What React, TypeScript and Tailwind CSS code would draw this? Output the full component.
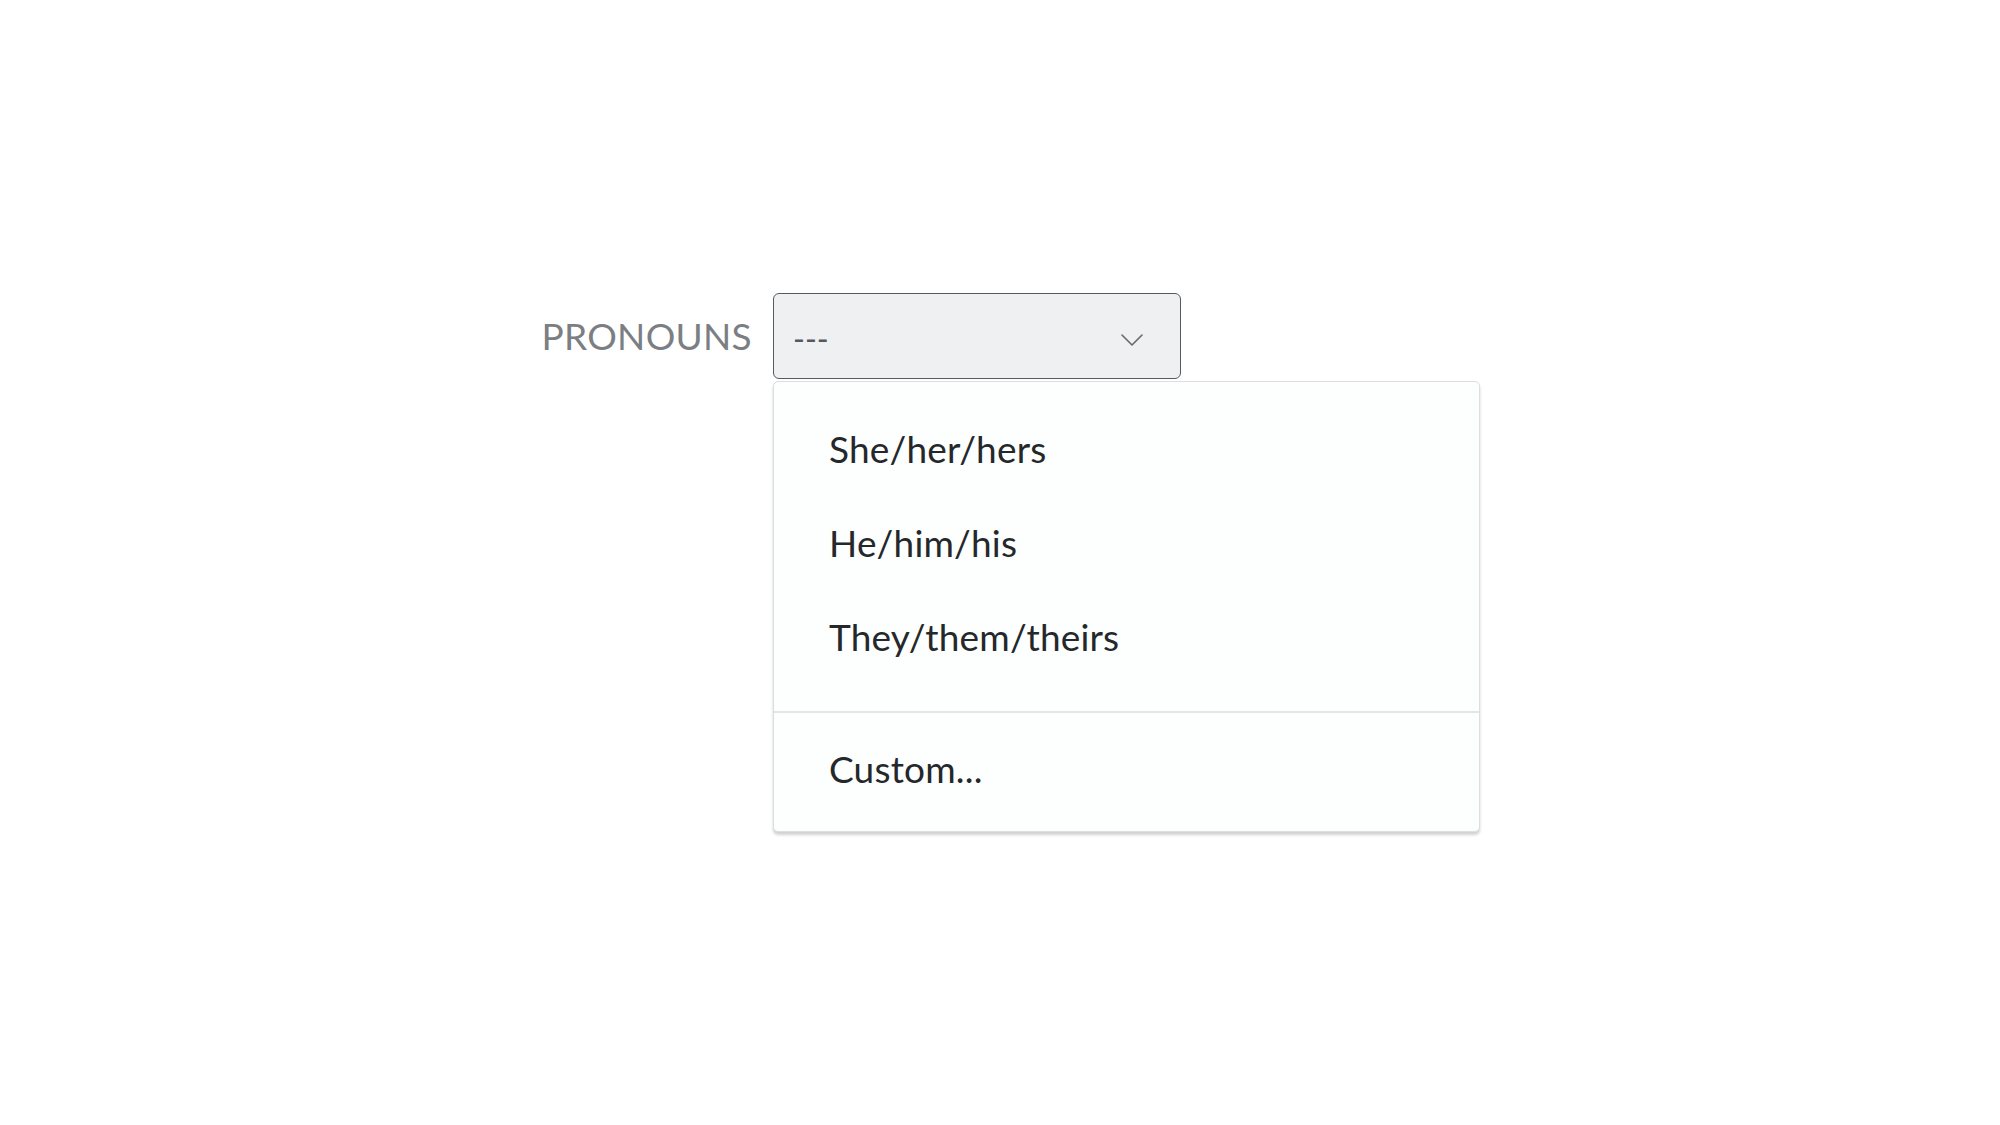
const options = ["She/her/hers", "He/him/his", "They/them/theirs"];

const font = { fontFamily: "Lato, 'Open Sans', sans-serif" };

export default function App() {
  return (
    <main
      className="min-h-screen w-full bg-white pt-[293px] pl-[536px]"
      style={font}
    >
      <div className="flex items-center">
        <label className="w-[237px] pr-[21px] text-right text-[37px] tracking-[0.3px] text-[#7b7f83]">
          PRONOUNS
        </label>
        <div className="relative">
          <div className="flex h-[86px] w-[408px] items-center justify-between rounded-[6px] border-[1.5px] border-[#56595d] bg-[#eff0f1] pl-[19px] pr-[37px]">
            <span className="pt-[6px] text-[32px] text-[#55595d]">---</span>
            <svg
              className="mt-[8px] h-[12px] w-[22px] text-[#666a6e]"
              viewBox="0 0 22 12"
              fill="none"
              stroke="currentColor"
              strokeWidth={1.6}
              strokeLinecap="round"
              strokeLinejoin="round"
            >
              <path d="M1 1l10 10L21 1" />
            </svg>
          </div>
          <div className="absolute left-0 top-[88px] z-10 w-[707px] rounded-[5px] border border-[#dcdedf] bg-[#fdfefe] shadow-[0_3px_3px_rgba(0,0,0,0.18)]">
            <ul className="pt-[20px] pb-[27px]">
              {options.map((opt) => (
                <li
                  key={opt}
                  className="flex h-[94px] items-center pl-[55px] text-[37px] tracking-[0.2px] text-[#25282b]"
                >
                  {opt}
                </li>
              ))}
            </ul>
            <div className="border-t-2 border-[#e3e5e6] pt-[9px] pb-[15px]">
              <div className="flex h-[94px] items-center pl-[55px] text-[37px] tracking-[0.2px] text-[#25282b]">
                Custom...
              </div>
            </div>
          </div>
        </div>
      </div>
    </main>
  );
}
